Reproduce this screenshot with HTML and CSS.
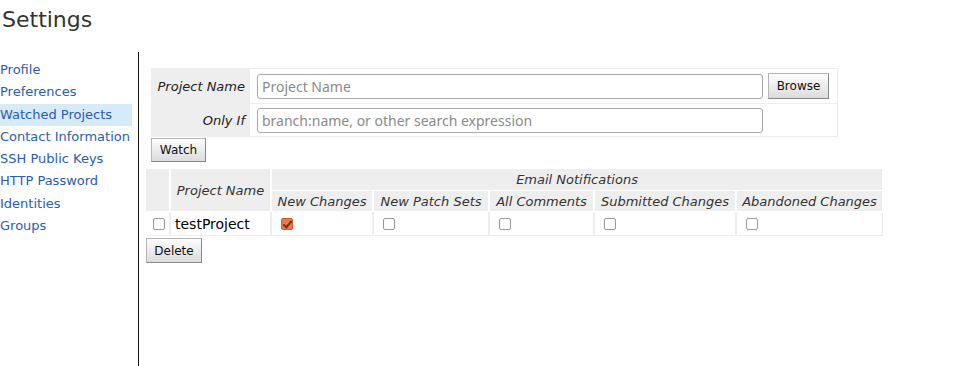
FILE: index.html
```html
<!DOCTYPE html>
<html>
<head>
<meta charset="utf-8">
<title>Settings</title>
<link rel="stylesheet" href="styles.css">
</head>
<body>
<h1 class="title">Settings</h1>
<div class="layout">
  <nav class="nav">
    <a class="nav-item" href="#">Profile</a>
    <a class="nav-item" href="#">Preferences</a>
    <a class="nav-item selected" href="#">Watched Projects</a>
    <a class="nav-item" href="#">Contact Information</a>
    <a class="nav-item" href="#">SSH Public Keys</a>
    <a class="nav-item" href="#">HTTP Password</a>
    <a class="nav-item" href="#">Identities</a>
    <a class="nav-item" href="#">Groups</a>
  </nav>
  <div class="divider"></div>
  <main class="main">
    <div class="watch-block">
      <div class="watch-form">
        <div class="form-row row-first">
          <div class="label">Project Name</div>
          <div class="field"><input class="text-input" type="text" placeholder="Project Name"><button class="btn browse">Browse</button></div>
        </div>
        <div class="form-row row-second">
          <div class="label">Only If</div>
          <div class="field"><input class="text-input" type="text" placeholder="branch:name, or other search expression"></div>
        </div>
      </div>
      <button class="btn watch">Watch</button>
    </div>
    <table class="watch-table">
      <colgroup>
        <col class="c-cb"><col class="c-name"><col class="c-nc"><col class="c-nps"><col class="c-ac"><col class="c-sc"><col class="c-abc">
      </colgroup>
      <thead>
        <tr class="head-top">
          <th rowspan="2" class="hcell"></th>
          <th rowspan="2" class="hcell">Project Name</th>
          <th colspan="5" class="hcell group">Email Notifications</th>
        </tr>
        <tr>
          <th class="hcell">New Changes</th>
          <th class="hcell">New Patch Sets</th>
          <th class="hcell">All Comments</th>
          <th class="hcell">Submitted Changes</th>
          <th class="hcell">Abandoned Changes</th>
        </tr>
      </thead>
      <tbody>
        <tr>
          <td class="cell cbcell"><input type="checkbox" class="cb"></td>
          <td class="cell name">testProject</td>
          <td class="cell"><input type="checkbox" class="cb" checked></td>
          <td class="cell"><input type="checkbox" class="cb"></td>
          <td class="cell"><input type="checkbox" class="cb"></td>
          <td class="cell"><input type="checkbox" class="cb"></td>
          <td class="cell"><input type="checkbox" class="cb"></td>
        </tr>
      </tbody>
    </table>
    <button class="btn delete">Delete</button>
  </main>
</div>
</body>
</html>
```

FILE: styles.css
```css
html, body {
  margin: 0;
  padding: 0;
  background: #fff;
}
body {
  font-family: "DejaVu Sans", "Liberation Sans", sans-serif;
  font-size: 13px;
  color: #222;
  width: 961px;
  height: 366px;
  overflow: hidden;
}
.title {
  margin: 0;
  padding: 7px 0 0 2px;
  height: 45px;
  font-size: 22px;
  line-height: 26px;
  font-weight: normal;
  color: #333;
  font-family: "DejaVu Sans", sans-serif;
}
.layout {
  display: flex;
  height: 314px;
}
.nav {
  width: 132px;
  padding-top: 7px;
  display: flex;
  flex-direction: column;
  flex: none;
}
.nav-item {
  display: block;
  height: 22.3px;
  line-height: 22.3px;
  color: #2a5db0;
  text-decoration: none;
  font-size: 13px;
  white-space: nowrap;
}
.nav-item.selected {
  background: #d6eaf8;
}
.divider {
  margin-left: 6px;
  width: 1px;
  background: #111;
  flex: none;
}
.main {
  padding: 16px 0 0 7px;
}
.watch-block {
  padding-left: 5px;
}
.watch-form {
  width: 687px;
  display: flex;
  flex-direction: column;
}
.form-row {
  display: flex;
}
.form-row .label {
  background: #eee;
  width: 99px;
  flex: none;
  padding-right: 5px;
  box-sizing: border-box;
  text-align: right;
  font-style: italic;
  font-size: 13px;
  color: #222;
  display: flex;
  align-items: center;
  justify-content: flex-end;
}
.form-row .field {
  flex: 1;
  display: flex;
  align-items: center;
  padding-left: 7px;
  border: 1px solid #eee;
  border-left: none;
  white-space: nowrap;
}
.row-first .field {
  padding-top: 4px;
  padding-bottom: 4px;
}
.row-second .field {
  border-top: none;
  padding-top: 4px;
  padding-bottom: 3px;
}
.text-input {
  width: 506px;
  height: 25px;
  flex: none;
  box-sizing: border-box;
  border: 1px solid #a8a8a8;
  border-radius: 3px;
  padding: 0 4px;
  font-family: "Noto Sans", "Open Sans", sans-serif;
  font-size: 14px;
  color: #333;
  margin: 0;
}
.text-input::placeholder {
  color: #8a8a8a;
}
.btn {
  font-family: "DejaVu Sans", sans-serif;
  font-size: 12px;
  color: #111;
  background: linear-gradient(#fdfdfd, #dcdcdc);
  border: 1px solid #b5b5b5;
  border-right-color: #888;
  border-bottom-color: #888;
  border-radius: 0;
  padding: 0;
  margin: 0;
  box-sizing: border-box;
}
.browse {
  width: 61px;
  height: 26px;
  margin-left: 5px;
  flex: none;
}
.watch {
  display: block;
  width: 55px;
  height: 24px;
  margin-top: 1px;
}
.watch-table {
  margin-top: 7px;
  border-collapse: separate;
  border-spacing: 0;
  table-layout: fixed;
  width: 737px;
}
.c-cb { width: 25px; }
.c-name { width: 101px; }
.c-nc { width: 102px; }
.c-nps { width: 116px; }
.c-ac { width: 105px; }
.c-sc { width: 142px; }
.c-abc { width: 146px; }
.hcell {
  background: #eee;
  border-right: 2px solid #fff;
  border-bottom: 1px solid #fff;
  font-style: italic;
  font-weight: normal;
  font-size: 13px;
  color: #333;
  height: 20px;
  padding: 0;
  text-align: center;
  white-space: nowrap;
}
.head-top .group {
  height: 21px;
  border-right: 1px solid #fff;
}
thead tr:last-child .hcell:last-child {
  border-right: 1px solid #fff;
}
.cell {
  border-right: 2px solid #eee;
  border-bottom: 1px solid #eee;
  height: 23px;
  padding: 0 0 0 9px;
  vertical-align: middle;
}
.cell:last-child {
  border-right: 1px solid #eee;
}
.cell.cbcell {
  padding-left: 7px;
}
.cell.name {
  padding-left: 4px;
  font-size: 14px;
  color: #000;
}
.cb {
  appearance: none;
  -webkit-appearance: none;
  width: 12px;
  height: 12px;
  margin: 0;
  border: 1px solid #9a9a9a;
  border-radius: 2px;
  background: #fff;
  display: block;
  box-sizing: border-box;
  position: relative;
}
.cb:checked {
  background: #ea7a48;
  border-color: #c85a2e;
}
.cb:checked::after {
  content: "";
  position: absolute;
  left: 3px;
  top: 0px;
  width: 3px;
  height: 7px;
  border: solid #6a3018;
  border-width: 0 2px 2px 0;
  transform: rotate(40deg);
}
.delete {
  display: block;
  width: 56px;
  height: 25px;
  margin-top: 2px;
}
```
